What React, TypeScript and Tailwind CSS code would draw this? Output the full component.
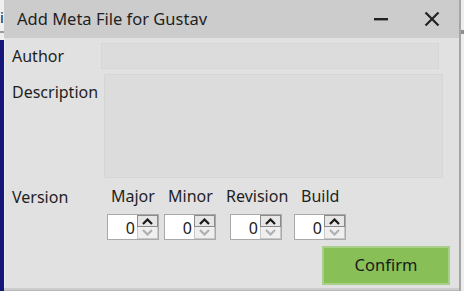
import React from "react"

const FONT = { fontFamily: '"Noto Sans", "Open Sans", sans-serif' }

function Spinner() {
  return (
    <div className="flex h-[26px] w-[52px] border border-[#a9a9a9] bg-white">
      <div className="flex flex-1 items-center justify-end pr-[2px] pt-[1px] text-[16px] leading-none text-[#1a1a1a]">0</div>
      <div className="flex w-[21px] flex-col">
        <div className="flex h-[12px] items-center justify-center border border-[#8a8a8a] bg-[#e6e6e6]">
          <svg width="11" height="7" viewBox="0 0 11 7">
            <path d="M1 6 L5.5 1.5 L10 6" fill="none" stroke="#1a1a1a" strokeWidth="2.2" />
          </svg>
        </div>
        <div className="flex flex-1 items-center justify-center border border-t-0 border-[#c8c8c8] bg-[#efefef]">
          <svg width="11" height="7" viewBox="0 0 11 7">
            <path d="M1 1 L5.5 5.5 L10 1" fill="none" stroke="#b0b0b0" strokeWidth="2.2" />
          </svg>
        </div>
      </div>
    </div>
  )
}

export default function App() {
  return (
    <div className="flex h-[291px] w-[464px] overflow-hidden bg-[#ececec]" style={FONT}>
      {/* desktop behind, left */}
      <div className="flex w-[4px] flex-col">
        <div className="h-[31px] overflow-hidden bg-[#f0f0f0] pt-[10px] text-[15px] leading-none text-[#222]">i</div>
        <div className="h-[2px] bg-[#9a9a9a]" />
        <div className="h-[7px] bg-[#eeeeee]" />
        <div className="flex-1 bg-[#16167a]" />
      </div>

      {/* dialog */}
      <div className="flex w-[455px] flex-col bg-[#cccccc]">
        <div className="flex h-[38px] items-center pl-[13px] pr-[19px] text-[#1f1f1f]">
          <span className="text-[16.5px]">Add Meta File for Gustav</span>
          <div className="ml-auto flex items-center gap-[36px]">
            <svg width="14" height="4" viewBox="0 0 14 4">
              <rect x="0" y="1" width="14" height="2.4" fill="#222" />
            </svg>
            <svg width="16" height="16" viewBox="0 0 16 16">
              <path d="M1.5 1.5 L14.5 14.5 M14.5 1.5 L1.5 14.5" stroke="#222" strokeWidth="2.2" />
            </svg>
          </div>
        </div>

        <div className="mb-[2px] flex flex-1 flex-col border-l border-[#ececec] bg-[#e1e1e1] pl-[7px] pr-[7px] text-[16px] text-[#1f1f1f]">
          <div className="mt-[5px] flex h-[26px] items-center">
            <span className="w-[89px]">Author</span>
            <div className="h-[26px] w-[338px] border border-[#d6d6d6] bg-[#dcdcdc]" />
          </div>
          <div className="mt-[5px] flex">
            <span className="w-[92px] pt-[6px]">Description</span>
            <div className="h-[104px] w-[339px] border border-[#d6d6d6] bg-[#dcdcdc]" />
          </div>
          <div className="mt-[6px] flex">
            <span className="w-[95px] pt-[1px]">Version</span>
            <div className="flex flex-col">
              <div className="flex">
                <span className="w-[57px] pl-[4px]">Major</span>
                <span className="w-[58px] pl-[4px]">Minor</span>
                <span className="w-[75px] pl-[4px]">Revision</span>
                <span className="pl-[4px]">Build</span>
              </div>
              <div className="mt-[6px] flex">
                <Spinner />
                <div className="ml-[5px]"><Spinner /></div>
                <div className="ml-[14px]"><Spinner /></div>
                <div className="ml-[12px]"><Spinner /></div>
              </div>
            </div>
          </div>
          <div className="mt-[6px] flex justify-end pr-[2px]">
            <button className="h-[39px] w-[128px] border-2 border-[#a8d08a] bg-[#88c057] text-[16.5px] text-[#1a1a1a]">
              Confirm
            </button>
          </div>
        </div>
        <div className="h-[1px] bg-[#b8b8b8]" />
      </div>

      {/* desktop behind, right */}
      <div className="flex flex-1 flex-col border-l-2 border-[#a5a5a5] bg-[#eeeeee]">
        <div className="mt-[30px] h-[4px] bg-[#8f8f8f]" />
      </div>
    </div>
  )
}
